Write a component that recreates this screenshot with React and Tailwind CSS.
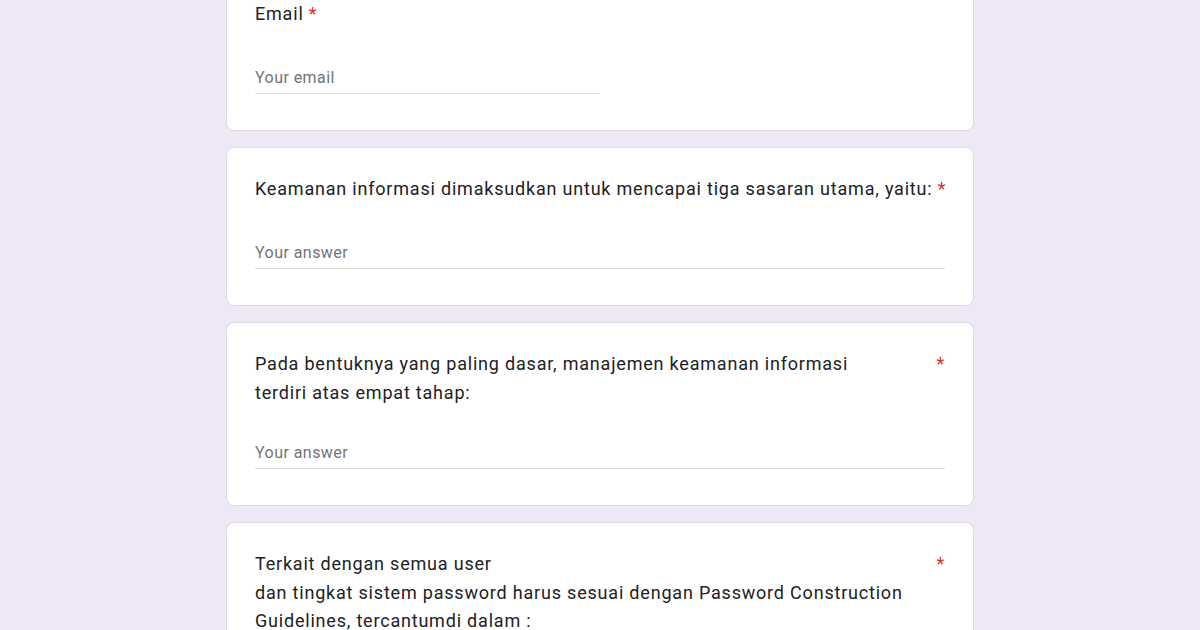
const questions = [
  { lines: ["Keamanan informasi dimaksudkan untuk mencapai tiga sasaran utama, yaitu:"], inline: true },
  { lines: ["Pada bentuknya yang paling dasar, manajemen keamanan informasi", "terdiri atas empat tahap:"] },
  {
    lines: [
      "Terkait dengan semua user",
      "dan tingkat sistem password harus sesuai dengan Password Construction",
      "Guidelines, tercantumdi dalam :",
    ],
  },
];

function Card({ children }) {
  return (
    <div className="w-[748px] bg-white rounded-[8px] border border-[#dadce0] px-[28px] pt-[27px] pb-[36px]">
      {children}
    </div>
  );
}

function Input({ placeholder, narrow, tight }) {
  return (
    <div
      className={`border-b border-[#e0e0e0] pb-[3px] ${narrow ? "w-[345px]" : "w-full"} ${
        tight ? "mt-[34px]" : "mt-[38px]"
      }`}
    >
      <div className="h-[24px] leading-[24px] text-[16px] tracking-[0.45px] text-[#70757a]">{placeholder}</div>
    </div>
  );
}

export default function App() {
  return (
    <div className="h-[630px] overflow-hidden bg-[#ede7f6] font-['Roboto',sans-serif] text-[#202124]">
      <div className="flex flex-col items-center gap-[16px] mt-[-28px]">
        <Card>
          <div className="text-[18px] leading-[28px] tracking-[0.8px]">
            Email <span className="text-[#d93025]">*</span>
          </div>
          <Input placeholder="Your email" narrow />
        </Card>

        {questions.map((q, i) => (
          <Card key={i}>
            {q.inline ? (
              <div className="whitespace-nowrap text-[18px] leading-[28px] tracking-[0.8px]">
                {q.lines[0]} <span className="text-[#d93025]">*</span>
              </div>
            ) : (
              <div className="flex justify-between text-[18px] leading-[28.5px] tracking-[0.8px]">
                <div>
                  {q.lines.map((l, j) => (
                    <div key={j}>{l}</div>
                  ))}
                </div>
                <span className="text-[#d93025]">*</span>
              </div>
            )}
            <Input placeholder="Your answer" tight={!q.inline} />
          </Card>
        ))}
      </div>
    </div>
  );
}
